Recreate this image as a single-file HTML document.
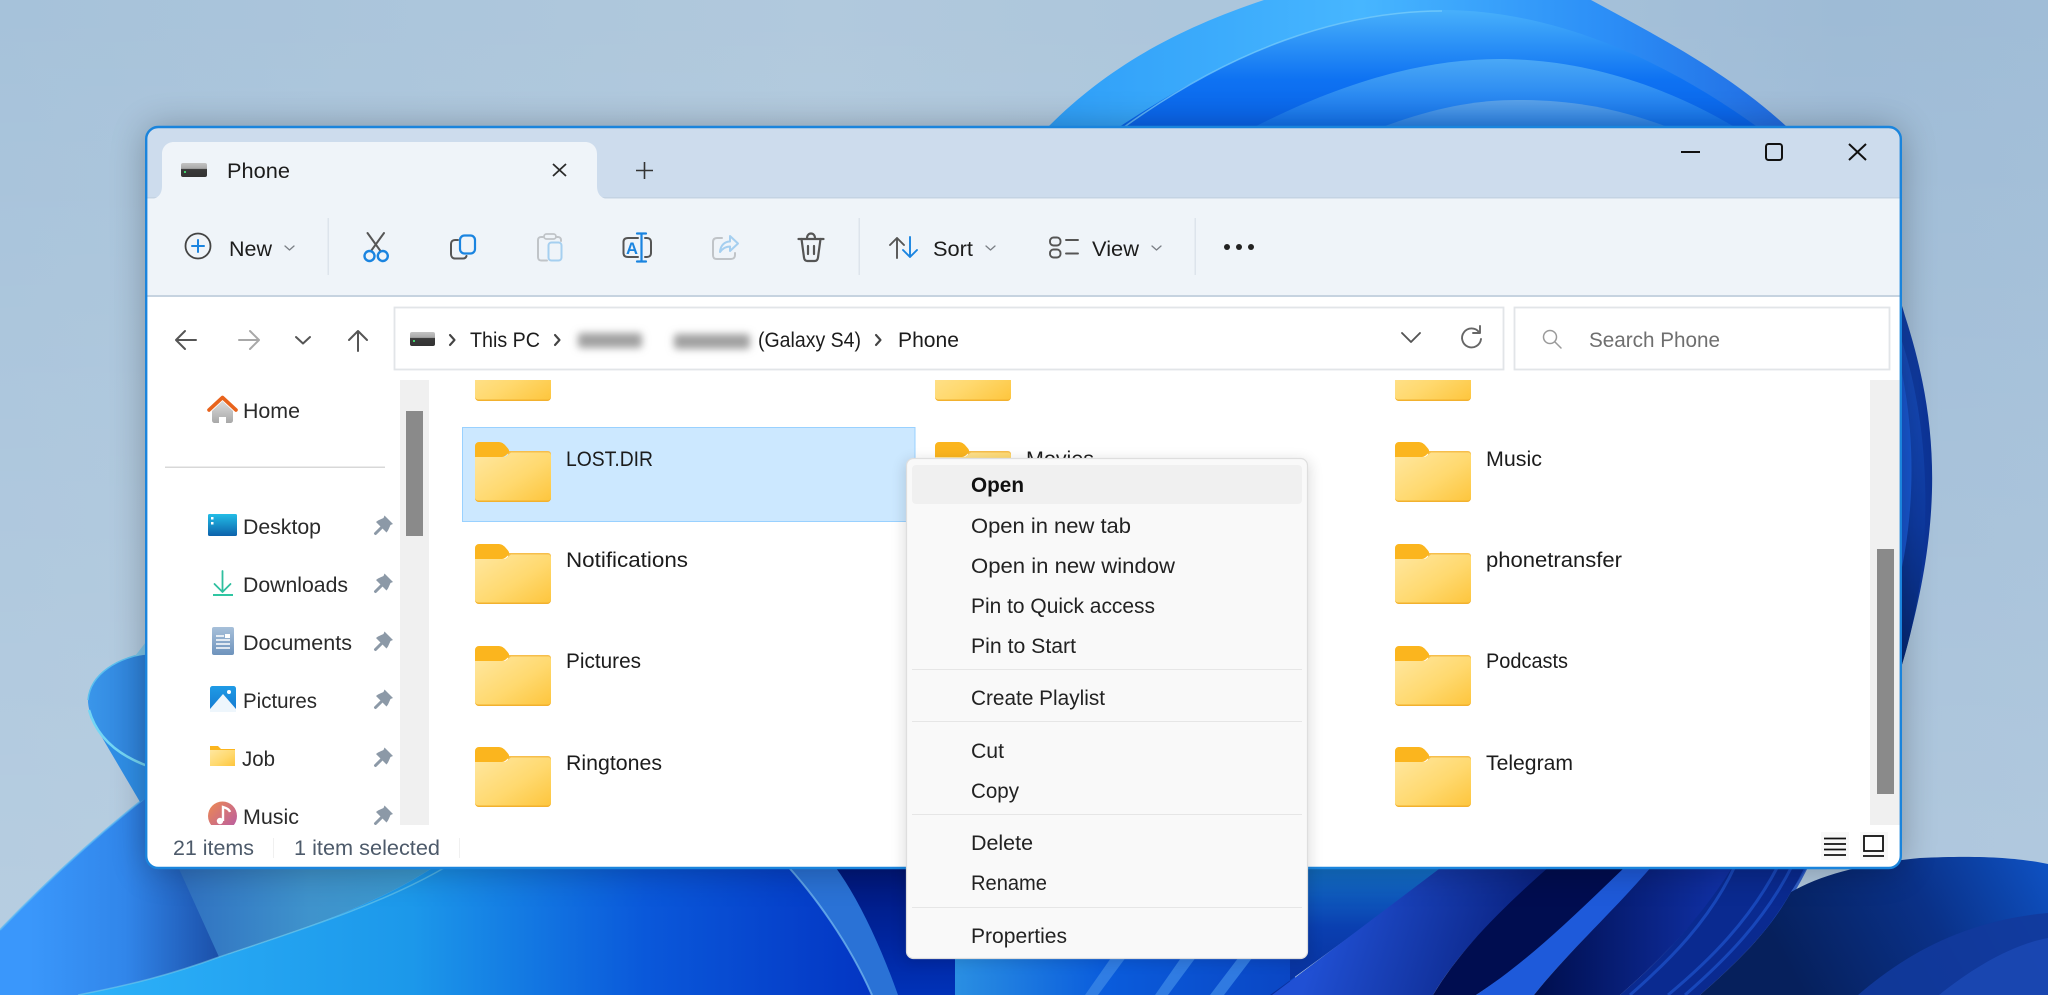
<!DOCTYPE html>
<html><head><meta charset="utf-8"><title>Phone</title>
<style>
html,body{margin:0;padding:0;width:2048px;height:995px;overflow:hidden;background:#a9c4dc}
svg{display:block;position:absolute;left:0;top:0}
text{font-family:"Liberation Sans",sans-serif;font-size:21.5px;fill:#1c1c1c}
.s{fill:#2a2a2a}.st{fill:#4d5a6a;font-size:21px}.m{fill:#222;font-size:21px}
.ic{fill:none;stroke-linecap:round;stroke-linejoin:round}
</style></head><body>
<svg width="2048" height="995" viewBox="0 0 2048 995" xmlns="http://www.w3.org/2000/svg">
<defs>
<linearGradient id="bg" x1="0" y1="0" x2="1" y2="0"><stop offset="0" stop-color="#a6c2da"/><stop offset=".4" stop-color="#b1c9dd"/><stop offset=".7" stop-color="#a9c4db"/><stop offset=".9" stop-color="#9ebbd6"/><stop offset="1" stop-color="#a0bdd7"/></linearGradient>
<linearGradient id="bgv" x1="0" y1="0" x2="0" y2="1"><stop offset="0" stop-color="#fff" stop-opacity="0"/><stop offset=".9" stop-color="#fff" stop-opacity=".18"/></linearGradient>
<linearGradient id="o" gradientUnits="userSpaceOnUse" x1="1050" y1="0" x2="1940" y2="0"><stop offset="0" stop-color="#2f9ff8"/><stop offset=".35" stop-color="#47b6ff"/><stop offset=".62" stop-color="#2c8ff7"/><stop offset=".85" stop-color="#2068e0"/><stop offset="1" stop-color="#0b2f90"/></linearGradient>
<linearGradient id="l2" gradientUnits="userSpaceOnUse" x1="0" y1="10" x2="0" y2="126"><stop offset="0" stop-color="#48b0fb"/><stop offset=".6" stop-color="#0e72f2"/><stop offset="1" stop-color="#0a64ea"/></linearGradient>
<linearGradient id="l3" gradientUnits="userSpaceOnUse" x1="0" y1="59" x2="0" y2="126"><stop offset="0" stop-color="#4aa8f6"/><stop offset="1" stop-color="#1272ee"/></linearGradient>
<linearGradient id="l4" gradientUnits="userSpaceOnUse" x1="0" y1="100" x2="0" y2="126"><stop offset="0" stop-color="#5ba3ea"/><stop offset="1" stop-color="#2b84ea"/></linearGradient>
<linearGradient id="rd" x1="0" y1="0" x2="0" y2="1"><stop offset="0" stop-color="#1a52c4"/><stop offset=".6" stop-color="#0e3aa0"/><stop offset="1" stop-color="#04256e"/></linearGradient>
<linearGradient id="ll" gradientUnits="userSpaceOnUse" x1="30" y1="0" x2="220" y2="0"><stop offset="0" stop-color="#3a97fb"/><stop offset=".5" stop-color="#3186ea"/><stop offset="1" stop-color="#1b4fa8"/></linearGradient>
<linearGradient id="sw" gradientUnits="userSpaceOnUse" x1="88" y1="0" x2="150" y2="0"><stop offset="0" stop-color="#3a96ea"/><stop offset="1" stop-color="#2d7fd8"/></linearGradient>
<linearGradient id="r1" gradientUnits="userSpaceOnUse" x1="175" y1="0" x2="444" y2="0"><stop offset="0" stop-color="#2f6fc0"/><stop offset=".5" stop-color="#3f93cc"/><stop offset="1" stop-color="#3a9ad0"/></linearGradient>
<linearGradient id="r2" gradientUnits="userSpaceOnUse" x1="100" y1="0" x2="880" y2="0"><stop offset="0" stop-color="#2cb0f8"/><stop offset=".4" stop-color="#1c98ea"/><stop offset=".7" stop-color="#0a58da"/><stop offset="1" stop-color="#0334c2"/></linearGradient>
<linearGradient id="nv" gradientUnits="userSpaceOnUse" x1="0" y1="868" x2="0" y2="995"><stop offset="0" stop-color="#00177a"/><stop offset=".6" stop-color="#0026a0"/><stop offset="1" stop-color="#0032b8"/></linearGradient>
<linearGradient id="u" gradientUnits="userSpaceOnUse" x1="955" y1="0" x2="1290" y2="0"><stop offset="0" stop-color="#2a8fe2"/><stop offset=".45" stop-color="#0a5cdc"/><stop offset="1" stop-color="#0a46c4"/></linearGradient>
<linearGradient id="b0" x1="0" y1="0" x2="0" y2="1"><stop offset="0" stop-color="#1478cc"/><stop offset=".5" stop-color="#0a3fb0"/><stop offset="1" stop-color="#082f9c"/></linearGradient>
<linearGradient id="b1" gradientUnits="userSpaceOnUse" x1="1330" y1="900" x2="1520" y2="960"><stop offset="0" stop-color="#2050d4"/><stop offset="1" stop-color="#0a2280"/></linearGradient>
<linearGradient id="dk" gradientUnits="userSpaceOnUse" x1="1540" y1="0" x2="1720" y2="0"><stop offset="0" stop-color="#000f50"/><stop offset="1" stop-color="#1030a4"/></linearGradient>
<linearGradient id="br" gradientUnits="userSpaceOnUse" x1="1800" y1="990" x2="2040" y2="860"><stop offset="0" stop-color="#06205c"/><stop offset=".55" stop-color="#0a3188"/><stop offset="1" stop-color="#0e50c0"/></linearGradient>
<linearGradient id="fg" x1="0" y1="0" x2="1" y2="1"><stop offset="0" stop-color="#ffe7a0"/><stop offset=".55" stop-color="#ffd96f"/><stop offset="1" stop-color="#fdc53c"/></linearGradient>
<linearGradient id="hm" x1="0" y1="0" x2="0" y2="1"><stop offset="0" stop-color="#dcdcdc"/><stop offset="1" stop-color="#a8a8a8"/></linearGradient>
<linearGradient id="dt" x1="0" y1="0" x2="0" y2="1"><stop offset="0" stop-color="#23bde6"/><stop offset="1" stop-color="#0d62ab"/></linearGradient>
<linearGradient id="dc" x1="0" y1="0" x2="0" y2="1"><stop offset="0" stop-color="#a7c0da"/><stop offset="1" stop-color="#6e93bc"/></linearGradient>
<linearGradient id="pc" x1="0" y1="0" x2="0" y2="1"><stop offset="0" stop-color="#1f9be6"/><stop offset="1" stop-color="#1578cf"/></linearGradient>
<linearGradient id="mu" x1="0" y1="0" x2="1" y2="1"><stop offset="0" stop-color="#ee8a50"/><stop offset="1" stop-color="#b65aa8"/></linearGradient>
<linearGradient id="dr" x1="0" y1="0" x2="0" y2="1"><stop offset="0" stop-color="#c4c4c4"/><stop offset=".4" stop-color="#a8a8a8"/><stop offset=".45" stop-color="#3a3a3a"/><stop offset="1" stop-color="#333"/></linearGradient>
<filter id="sh" x="-10%" y="-10%" width="120%" height="120%"><feGaussianBlur stdDeviation="18"/></filter>
<filter id="ms" x="-10%" y="-10%" width="120%" height="120%"><feGaussianBlur stdDeviation="7"/></filter>
<filter id="bl" x="-20%" y="-150%" width="140%" height="400%"><feGaussianBlur stdDeviation="4"/></filter>
<clipPath id="win"><rect x="146" y="126" width="1755" height="742" rx="12"/></clipPath>
<clipPath id="top"><rect x="380" y="380" width="1520" height="445"/></clipPath>
<clipPath id="side"><rect x="150" y="380" width="250" height="445"/></clipPath>
<g id="f">
<path d="M33 9H73a3 3 0 0 1 3 3v6H33z" fill="#f6be4c"/>
<path d="M0 15H30L36 10.500H73a3 3 0 0 1 3 3V56a4 4 0 0 1-4 4H4a4 4 0 0 1-4-4z" fill="url(#fg)"/>
<path d="M0 18V4a4 4 0 0 1 4-4H23C26 0 28 1 30 3L33 6.500C34.500 8.500 34.500 10 33 11.500L30 14C28.500 15 27 15 26 15H0Z" fill="#fbb51e"/>
<path d="M0 56a4 4 0 0 0 4 2.500H72a4 4 0 0 0 4-2.500a4 4 0 0 1-4 4H4a4 4 0 0 1-4-4z" fill="#f2b12e"/>
</g>
<g id="pin"><path d="M10.500 .5L19 9L16.500 10L14 15.500L12.500 17.500L2 7L4 5.500L9.500 3z" fill="#8c99a7"/><path d="M1.500 18.500L7.500 12.500" stroke="#8c99a7" stroke-width="3" stroke-linecap="round"/></g>
</defs>

<!-- wallpaper -->
<rect width="2048" height="995" fill="url(#bg)"/>
<rect width="2048" height="995" fill="url(#bgv)"/>

<path d="M1000 170C1020 150 1035 138 1049 126C1110 65 1180 28 1264 0H1591C1655 35 1725 70 1786 126C1850 190 1890 260 1905 316C1942 430 1942 530 1900 671L1500 700Z" fill="url(#o)"/>
<path d="M1100 140C1230 50 1340 10 1442 10C1570 10 1690 75 1775 140Z" fill="url(#l2)"/>
<path d="M1120 130C1230 50 1340 11 1442 11" fill="none" stroke="#7cd0fb" stroke-width="1.500" opacity=".7"/>
<path d="M1230 140C1330 85 1420 59 1499 59C1590 59 1680 90 1755 140Z" fill="url(#l3)"/>
<path d="M1350 140C1420 110 1470 100 1517 100C1580 100 1630 110 1700 140Z" fill="url(#l4)"/>
<path d="M1880 290C1925 370 1945 530 1900 671L1880 680Z" fill="url(#rd)"/>
<path d="M1880 300C1922 400 1922 540 1880 640Z" fill="#1a5cd8" opacity=".85"/>

<!-- lower left -->
<path d="M0 930C50 878 100 833 146 797L200 860L240 995H0Z" fill="url(#ll)"/>
<path d="M0 930C50 878 100 833 146 797" fill="none" stroke="#55b8f5" stroke-width="2" opacity=".7"/>
<path d="M90 717L140 802L160 790V740Z" fill="#2f8ee6"/>
<path d="M160 652C115 655 88 678 88 702C90 730 118 758 160 770Z" fill="url(#sw)"/>
<path d="M89 710C98 742 125 760 160 770" fill="none" stroke="#74d6f4" stroke-width="2.500"/>
<path d="M160 652C115 655 90 676 88 700" fill="none" stroke="#5cc0ee" stroke-width="1.500"/>
<path d="M135 656L146 642H160V653Z" fill="#7fc5e8"/>

<!-- lower band -->
<path d="M175 860L219 957C300 930 380 905 444 860Z" fill="url(#r1)"/>
<path d="M78 995C130 985 170 975 219 957C300 930 380 905 444 860H800L885 995Z" fill="url(#r2)"/>
<path d="M78 995C130 985 170 975 219 957C300 930 380 905 444 868" fill="none" stroke="#7bcfea" stroke-width="1.500" opacity=".55"/>
<path d="M825 860H960V995H895C875 940 855 900 825 860Z" fill="url(#nv)"/>
<path d="M782 860H830C858 895 882 950 898 995H872C850 945 815 895 782 860Z" fill="#2a72d6"/>
<path d="M782 860C815 895 850 945 872 995" fill="none" stroke="#6fb4ee" stroke-width="2" opacity=".8"/>
<rect x="955" y="930" width="340" height="65" fill="url(#u)"/>
<path d="M1085 995L1120 945H1135L1098 995ZM1155 995L1190 945H1205L1168 995ZM1210 995L1248 945H1262L1224 995Z" fill="#3a86e6" opacity=".8"/>

<!-- lower right -->
<path d="M1290 860H1455L1270 995H1290Z" fill="url(#b0)"/>
<path d="M1272 995L1443 866H1555C1500 910 1460 950 1433 995Z" fill="url(#b1)"/>
<path d="M1433 995C1460 950 1500 910 1550 866H1630C1570 925 1530 960 1476 995Z" fill="#000d50"/>
<path d="M1476 995C1530 960 1580 910 1626 866H1654C1610 915 1570 950 1534 995Z" fill="#1e5ada"/>
<path d="M1534 995C1570 950 1610 915 1652 866H1735C1700 920 1660 960 1620 995Z" fill="url(#dk)"/>
<path d="M1620 995C1660 960 1700 920 1733 866H1808L1791 892C1770 930 1740 960 1700 995Z" fill="#0a2a90"/>
<path d="M1735 866C1710 920 1670 960 1630 995M1778 866C1750 920 1710 960 1668 995M1792 866C1765 920 1725 960 1685 995M1806 868C1780 920 1745 960 1705 995" fill="none" stroke="#1b4cc2" stroke-width="3" opacity=".85"/>
<path d="M1791 892C1830 870 1880 862 1920 858C1980 855 2020 858 2048 864V995H1700C1740 960 1770 930 1791 892Z" fill="url(#br)"/>
<path d="M1858 995C1910 950 1970 920 2048 913V995Z" fill="#123a9c" opacity=".9"/>
<path d="M1939 995C1970 970 2010 945 2048 938V995Z" fill="#1b48b2" opacity=".9"/>

<!-- window -->
<rect x="146" y="128" width="1755" height="742" rx="12" fill="#000" opacity=".28" filter="url(#sh)"/>
<g clip-path="url(#win)">
<rect x="146" y="126" width="1755" height="742" fill="#fff"/>
<rect x="146" y="126" width="1755" height="72" fill="#cddced"/>
<rect x="146" y="197" width="1755" height="100" fill="#eff4f9"/>
<rect x="146" y="197" width="1755" height="1.500" fill="#c4d3e3"/>
<rect x="146" y="295" width="1755" height="2" fill="#c6d3e0"/>
<path d="M150 199C158 199 162 194 162 186V154C162 147 167 142 174 142H585C592 142 597 147 597 154V186C597 194 601 199 609 199Z" fill="#eff4f9"/>

<!-- tab -->
<rect x="181" y="163" width="26" height="14" rx="2" fill="url(#dr)"/><rect x="184" y="171" width="2" height="2" fill="#3fd06a"/>
<text x="227" y="178" textLength="63" lengthAdjust="spacingAndGlyphs" font-size="21.500">Phone</text>
<path d="M553 164L566 176M566 164L553 176" stroke="#2a2a2a" stroke-width="1.800" fill="none"/>
<path d="M644.500 162V179M636 170.500H653" stroke="#333" stroke-width="1.600" fill="none"/>

<!-- controls -->
<path d="M1681 152H1700" stroke="#111" stroke-width="2"/>
<rect x="1766" y="144" width="16" height="16" rx="2.500" fill="none" stroke="#111" stroke-width="2"/>
<path d="M1849 144L1866 160M1866 144L1849 160" stroke="#111" stroke-width="2"/>

<!-- toolbar -->
<circle cx="198" cy="246" r="12.500" class="ic" stroke="#444" stroke-width="1.800"/>
<path d="M198 240V252M192 246H204" stroke="#1a84e0" stroke-width="2" class="ic"/>
<text x="229" y="256" textLength="43" lengthAdjust="spacingAndGlyphs">New</text>
<path d="M285 246L289.500 250L294 246" class="ic" stroke="#7a7f85" stroke-width="1.300"/>
<rect x="327.500" y="218" width="1.500" height="57" fill="#dde4ec"/>

<path d="M367.500 233L380.500 251M384 233L371 251" class="ic" stroke="#565656" stroke-width="2"/>
<circle cx="369.500" cy="256" r="5" class="ic" stroke="#1a84e0" stroke-width="2.400"/><circle cx="382.800" cy="256" r="5" class="ic" stroke="#1a84e0" stroke-width="2.400"/>

<path d="M458 240H455C452.500 240 451 241.500 451 244V254C451 256.500 452.500 258.500 455 258.500H463C465 258.500 466 257.500 466.500 256" class="ic" stroke="#555" stroke-width="2"/>
<rect x="460" y="235.500" width="15" height="18" rx="4.500" class="ic" stroke="#1a84e0" stroke-width="2.200"/>

<path d="M543 237H541C539 237 538 238.500 538 240V257C538 259 539 260.500 541 260.500H547M556 237H558C560 237 561 238.500 561 240V241" class="ic" stroke="#c0c4c8" stroke-width="2"/>
<rect x="544" y="234" width="12" height="5" rx="2.500" class="ic" stroke="#c0c4c8" stroke-width="1.800"/>
<rect x="548.500" y="242.500" width="13" height="18" rx="3" class="ic" stroke="#a5cff0" stroke-width="2"/>

<path d="M638 238H628C625 238 623.500 239.500 623.500 242V253C623.500 255.500 625 257 628 257H638M645 238H647C649.500 238 651 239.500 651 242V253C651 255.500 649.500 257 647 257H645" class="ic" stroke="#555" stroke-width="2"/>
<path d="M641.500 234V261M637 233.500H646M637 261.500H646" class="ic" stroke="#1a84e0" stroke-width="2.200"/>
<text x="626" y="254" style="fill:#1a84e0;font-size:17px;font-weight:bold" textLength="12" lengthAdjust="spacingAndGlyphs">A</text>

<path d="M722 238H717C714 238 713 239.500 713 242V255C713 258 714 259 717 259H731C733.500 259 735 257.500 735 255V253" class="ic" stroke="#c0c4c8" stroke-width="2"/>
<path d="M720 252C720.500 245 725 241.500 730 241.500V236L738 243.500L730 251V246.500C726 246.500 723 248 720 252Z" class="ic" stroke="#a5cff0" stroke-width="2"/>

<path d="M798.500 239H823.500M807 238.500C807 235 809 233.500 811 233.500C813 233.500 815 235 815 238.500" class="ic" stroke="#555" stroke-width="2.200"/>
<path d="M801.500 239L804 257.500C804.300 260 805.500 261 807.500 261H814.500C816.500 261 817.700 260 818 257.500L820.500 239M808 246V254M814 246V254" class="ic" stroke="#555" stroke-width="2.200"/>

<rect x="858.500" y="218" width="1.500" height="57" fill="#dde4ec"/>
<path d="M897 258V238M890 245L897 238L904 245" class="ic" stroke="#555" stroke-width="1.900"/>
<path d="M910 237V257M903 250L910 257L917 250" class="ic" stroke="#1a84e0" stroke-width="1.900"/>
<text x="933" y="256" textLength="40" lengthAdjust="spacingAndGlyphs">Sort</text>
<path d="M986 246L990.500 250L995 246" class="ic" stroke="#7a7f85" stroke-width="1.300"/>
<rect x="1050" y="237.500" width="10.500" height="8" rx="3.500" class="ic" stroke="#555" stroke-width="1.900"/>
<rect x="1050" y="249.500" width="10.500" height="8" rx="3.500" class="ic" stroke="#555" stroke-width="1.900"/>
<path d="M1066 240H1078M1066 253.500H1078" class="ic" stroke="#555" stroke-width="1.900"/>
<text x="1092" y="256" textLength="47" lengthAdjust="spacingAndGlyphs">View</text>
<path d="M1152 246L1156.500 250L1161 246" class="ic" stroke="#7a7f85" stroke-width="1.300"/>
<rect x="1194.500" y="218" width="1.500" height="57" fill="#dde4ec"/>
<circle cx="1227" cy="247" r="3" fill="#222"/><circle cx="1239" cy="247" r="3" fill="#222"/><circle cx="1251" cy="247" r="3" fill="#222"/>

<!-- nav -->
<path d="M196 340H176M185 331L176 340L185 349" class="ic" stroke="#555" stroke-width="2"/>
<path d="M239 340H259M250 331L259 340L250 349" class="ic" stroke="#a8a8a8" stroke-width="2"/>
<path d="M296 337L303 343.500L310 337" class="ic" stroke="#555" stroke-width="2"/>
<path d="M358 351V331M349 340L358 331L367 340" class="ic" stroke="#555" stroke-width="2"/>

<rect x="394.500" y="307.500" width="1109" height="62" fill="#fff" stroke="#e2e5e8" stroke-width="1.800"/>
<rect x="1514.500" y="307.500" width="375" height="62" fill="#fff" stroke="#e2e5e8" stroke-width="1.800"/>
<rect x="410" y="332" width="25" height="14" rx="2" fill="url(#dr)"/><rect x="413" y="340" width="2" height="2" fill="#3fd06a"/>
<path d="M450 335L454.500 340L450 345" class="ic" stroke="#444" stroke-width="2.100"/>
<text x="470" y="347" textLength="70" lengthAdjust="spacingAndGlyphs">This PC</text>
<path d="M555 335L559.500 340L555 345" class="ic" stroke="#444" stroke-width="2.100"/>
<g filter="url(#bl)" fill="#a0a0a0"><rect x="578" y="333" width="64" height="15" rx="3"/><rect x="674" y="334" width="76" height="15" rx="3"/></g>
<text x="758" y="347" textLength="103" lengthAdjust="spacingAndGlyphs">(Galaxy S4)</text>
<path d="M876 335L880.500 340L876 345" class="ic" stroke="#444" stroke-width="2.100"/>
<text x="898" y="347" textLength="61" lengthAdjust="spacingAndGlyphs">Phone</text>
<path d="M1402 333L1411 342L1420 333" class="ic" stroke="#555" stroke-width="1.900"/>
<path d="M1479 332A9.500 9.500 0 1 0 1481 339M1480 326V333H1473" class="ic" stroke="#666" stroke-width="1.900"/>
<circle cx="1550" cy="337" r="6.500" class="ic" stroke="#9a9a9a" stroke-width="1.500"/><path d="M1555 342L1561 348" class="ic" stroke="#9a9a9a" stroke-width="1.500"/>
<text x="1589" y="347" textLength="131" lengthAdjust="spacingAndGlyphs" style="fill:#6f6f6f">Search Phone</text>

<!-- sidebar -->
<g clip-path="url(#side)">
<path d="M212 411L222.500 401L233 411V420C233 422 232 423 230 423H226V417H219V423H215C213 423 212 422 212 420Z" fill="url(#hm)"/>
<path d="M209 410L222.500 397.500L236 410" class="ic" stroke="#e8631c" stroke-width="3.600"/>
<text x="243" y="418" textLength="57" lengthAdjust="spacingAndGlyphs" class="s">Home</text>
<rect x="165" y="466.500" width="220" height="1.500" fill="#d8d8d8"/>

<rect x="208" y="514" width="29" height="22" rx="1.500" fill="url(#dt)"/><rect x="211" y="517" width="2.500" height="2.500" fill="#fff"/><rect x="211" y="522" width="2.500" height="2.500" fill="#fff"/>
<text x="243" y="534" textLength="78" lengthAdjust="spacingAndGlyphs" class="s">Desktop</text>

<path d="M222.500 571V592M214.500 584L222.500 592L230.500 584" class="ic" stroke="#2fbf9f" stroke-width="1.800"/><path d="M213 595H233" stroke="#2fc6a2" stroke-width="2"/>
<text x="243" y="592" textLength="105" lengthAdjust="spacingAndGlyphs" class="s">Downloads</text>

<rect x="212" y="627" width="22" height="28" rx="2" fill="url(#dc)"/><path d="M216 636H224M216 640H230M216 644H230M216 648H230" stroke="#fff" stroke-width="1.400"/><rect x="225" y="634" width="5" height="4" fill="#fff"/>
<text x="243" y="650" textLength="109" lengthAdjust="spacingAndGlyphs" class="s">Documents</text>

<rect x="210" y="686" width="26" height="26" rx="2.500" fill="url(#pc)"/><path d="M210 709L223 694L236 709V712H210Z" fill="#eef6fc"/><circle cx="229" cy="692" r="2" fill="#fff"/>
<text x="243" y="708" textLength="74" lengthAdjust="spacingAndGlyphs" class="s">Pictures</text>

<path d="M210 746h8l3 3h14v3h-25z" fill="#fbb51e"/><rect x="210" y="750" width="25" height="16" fill="url(#fg)"/>
<text x="242" y="766" textLength="33" lengthAdjust="spacingAndGlyphs" class="s">Job</text>

<circle cx="222.500" cy="816" r="14.500" fill="url(#mu)"/><path d="M223 821V807C226 808 229 809 230 812" fill="none" stroke="#fff" stroke-width="2.400"/><circle cx="220" cy="821" r="3.200" fill="#fff"/>
<text x="243" y="824" textLength="56" lengthAdjust="spacingAndGlyphs" class="s">Music</text>
<use href="#pin" x="374" y="515"/><use href="#pin" x="374" y="573"/><use href="#pin" x="374" y="631"/><use href="#pin" x="374" y="689"/><use href="#pin" x="374" y="747"/><use href="#pin" x="374" y="805"/>
</g>
<rect x="400" y="380" width="29" height="445" fill="#f0f0f0"/>
<rect x="406" y="411" width="17" height="125" fill="#8a8a8a"/>

<!-- files -->
<rect x="462.500" y="427.500" width="452.500" height="94" fill="#cce8ff" stroke="#99d1ff" stroke-width="1"/>
<g clip-path="url(#top)">
<use href="#f" x="475" y="341"/><use href="#f" x="935" y="341"/><use href="#f" x="1395" y="341"/>
</g>
<use href="#f" x="475" y="442"/><use href="#f" x="935" y="442"/><use href="#f" x="1395" y="442"/>
<use href="#f" x="475" y="544"/><use href="#f" x="1395" y="544"/>
<use href="#f" x="475" y="646"/><use href="#f" x="1395" y="646"/>
<use href="#f" x="475" y="747"/><use href="#f" x="1395" y="747"/>
<text x="566" y="466" textLength="87" lengthAdjust="spacingAndGlyphs">LOST.DIR</text>
<text x="566" y="567" textLength="122" lengthAdjust="spacingAndGlyphs">Notifications</text>
<text x="566" y="668" textLength="75" lengthAdjust="spacingAndGlyphs">Pictures</text>
<text x="566" y="770" textLength="96" lengthAdjust="spacingAndGlyphs">Ringtones</text>
<text x="1026" y="466" textLength="68" lengthAdjust="spacingAndGlyphs">Movies</text>
<text x="1486" y="466" textLength="56" lengthAdjust="spacingAndGlyphs">Music</text>
<text x="1486" y="567" textLength="136" lengthAdjust="spacingAndGlyphs">phonetransfer</text>
<text x="1486" y="668" textLength="82" lengthAdjust="spacingAndGlyphs">Podcasts</text>
<text x="1486" y="770" textLength="87" lengthAdjust="spacingAndGlyphs">Telegram</text>

<rect x="1870" y="380" width="31" height="445" fill="#f0f0f0"/>
<rect x="1877" y="549" width="17" height="245" fill="#8a8a8a"/>

<!-- status -->
<text x="173" y="855" textLength="81" lengthAdjust="spacingAndGlyphs" class="st">21 items</text>
<text x="294" y="855" textLength="146" lengthAdjust="spacingAndGlyphs" class="st">1 item selected</text>
<rect x="273" y="838" width="1" height="20" fill="#f0f0f0"/><rect x="459" y="838" width="1" height="20" fill="#f0f0f0"/>
<rect x="1821" y="832" width="28" height="28" fill="#f8f8f8"/><rect x="1860" y="832" width="28" height="28" fill="#f8f8f8"/>
<path d="M1824 838.500H1846M1824 844H1846M1824 849.500H1846M1824 855H1846" stroke="#111" stroke-width="1.800"/>
<rect x="1864" y="836" width="19" height="15" fill="#fff" stroke="#111" stroke-width="1.800"/><path d="M1863 856H1884" stroke="#111" stroke-width="1.800"/>
</g>
<rect x="146.200" y="127" width="1754.600" height="741" rx="12" fill="none" stroke="#1a84dc" stroke-width="2.400"/>

<!-- context menu -->
<rect x="904" y="460" width="406" height="502" rx="8" fill="#000" opacity=".13" filter="url(#ms)"/>
<rect x="906.500" y="458.500" width="401" height="500" rx="7" fill="#f9f9f9" stroke="#dedede" stroke-width="1.200"/>
<rect x="912" y="465" width="390" height="39" rx="4" fill="#f0f0f0"/>
<text x="971" y="492" textLength="53" lengthAdjust="spacingAndGlyphs" class="m" style="font-weight:bold;fill:#111">Open</text>
<text x="971" y="533" textLength="160" lengthAdjust="spacingAndGlyphs" class="m">Open in new tab</text>
<text x="971" y="573" textLength="204" lengthAdjust="spacingAndGlyphs" class="m">Open in new window</text>
<text x="971" y="613" textLength="184" lengthAdjust="spacingAndGlyphs" class="m">Pin to Quick access</text>
<text x="971" y="653" textLength="105" lengthAdjust="spacingAndGlyphs" class="m">Pin to Start</text>
<rect x="912" y="669" width="390" height="1" fill="#e6e6e6"/>
<text x="971" y="705" textLength="134" lengthAdjust="spacingAndGlyphs" class="m">Create Playlist</text>
<rect x="912" y="721" width="390" height="1" fill="#e6e6e6"/>
<text x="971" y="758" textLength="33" lengthAdjust="spacingAndGlyphs" class="m">Cut</text>
<text x="971" y="798" textLength="48" lengthAdjust="spacingAndGlyphs" class="m">Copy</text>
<rect x="912" y="814" width="390" height="1" fill="#e6e6e6"/>
<text x="971" y="850" textLength="62" lengthAdjust="spacingAndGlyphs" class="m">Delete</text>
<text x="971" y="890" textLength="76" lengthAdjust="spacingAndGlyphs" class="m">Rename</text>
<rect x="912" y="907" width="390" height="1" fill="#e6e6e6"/>
<text x="971" y="943" textLength="96" lengthAdjust="spacingAndGlyphs" class="m">Properties</text>
</svg>
</body></html>
